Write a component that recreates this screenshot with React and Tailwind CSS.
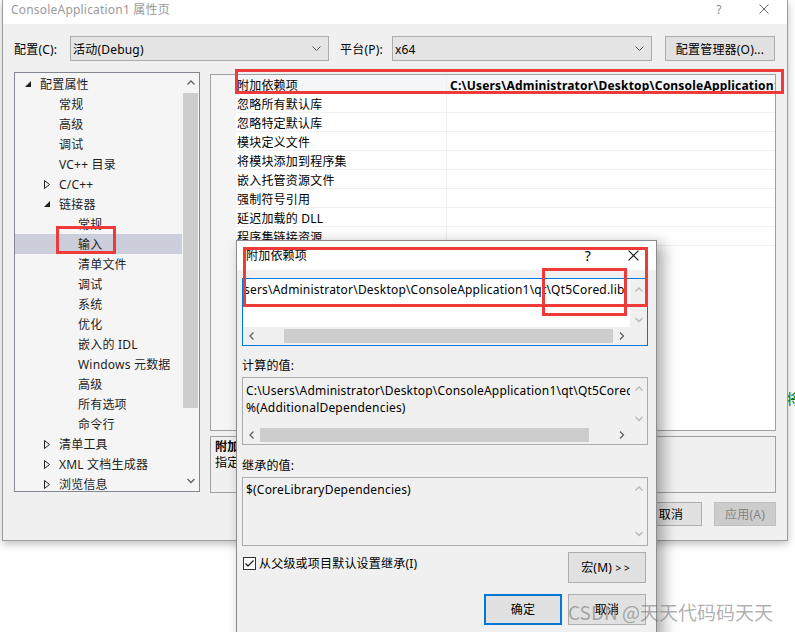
import React from "react";

const TREE = [
  { label: "配置属性", level: 0, exp: "open" },
  { label: "常规", level: 1 },
  { label: "高级", level: 1 },
  { label: "调试", level: 1 },
  { label: "VC++ 目录", level: 1 },
  { label: "C/C++", level: 1, exp: "closed" },
  { label: "链接器", level: 1, exp: "open" },
  { label: "常规", level: 2 },
  { label: "输入", level: 2, selected: true },
  { label: "清单文件", level: 2 },
  { label: "调试", level: 2 },
  { label: "系统", level: 2 },
  { label: "优化", level: 2 },
  { label: "嵌入的 IDL", level: 2 },
  { label: "Windows 元数据", level: 2 },
  { label: "高级", level: 2 },
  { label: "所有选项", level: 2 },
  { label: "命令行", level: 2 },
  { label: "清单工具", level: 1, exp: "closed" },
  { label: "XML 文档生成器", level: 1, exp: "closed" },
  { label: "浏览信息", level: 1, exp: "closed" },
];

const INDENT = ["pl-[10px]", "pl-[29px]", "pl-[48px]"];

const PROPS = [
  "附加依赖项",
  "忽略所有默认库",
  "忽略特定默认库",
  "模块定义文件",
  "将模块添加到程序集",
  "嵌入托管资源文件",
  "强制符号引用",
  "延迟加载的 DLL",
  "程序集链接资源",
];

const PATH = "C:\\Users\\Administrator\\Desktop\\ConsoleApplication1\\qt\\Qt5Cored.lib";

// small scroll arrows
const Chev = ({ dir, color = "#606060" }) => {
  const pts = {
    up: "0.5,4.5 4,1 7.5,4.5",
    down: "0.5,1 4,4.5 7.5,1",
    left: "4.5,0.5 1,4 4.5,7.5",
    right: "1,0.5 4.5,4 1,7.5",
  }[dir];
  const vertical = dir === "up" || dir === "down";
  return (
    <svg width={vertical ? 8 : 6} height={vertical ? 6 : 8} viewBox={vertical ? "0 0 8 6" : "0 0 6 8"}>
      <polyline points={pts} fill="none" stroke={color} strokeWidth="1.3" />
    </svg>
  );
};

const Expander = ({ exp }) => {
  if (exp === "open")
    return (
      <svg width="6" height="6" viewBox="0 0 6 6">
        <polygon points="6,0 6,6 0,6" fill="#1e1e1e" />
      </svg>
    );
  if (exp === "closed")
    return (
      <svg width="6" height="9" viewBox="0 0 6 9">
        <polygon points="0.5,0.5 5.5,4.5 0.5,8.5" fill="none" stroke="#1e1e1e" strokeWidth="1" />
      </svg>
    );
  return null;
};

const CloseX = ({ color, size = 10 }) => (
  <svg width={size} height={size} viewBox="0 0 10 10">
    <path d="M0.5 0.5 L9.5 9.5 M9.5 0.5 L0.5 9.5" stroke={color} strokeWidth="1" />
  </svg>
);

const Combo = ({ text, w }) => (
  <div className={`${w} h-[25px] flex items-center bg-[#e5e5e5] border border-[#acacac] pl-[2px] pr-[7px]`}>
    <span className="flex-1 pt-[3px]">{text}</span>
    <svg width="9" height="5" viewBox="0 0 9 5">
      <polyline points="0.5,0.5 4.5,4.5 8.5,0.5" fill="none" stroke="#555" strokeWidth="1" />
    </svg>
  </div>
);

const HScroll = ({ thumb }) => (
  <div className="h-[18px] flex items-center bg-[#f0f0f0]">
    <div className="w-[17px] flex justify-center">
      <Chev dir="left" />
    </div>
    <div className="flex-1 h-full flex items-center">
      <div className={`h-[14px] bg-[#cdcdcd] ${thumb}`} />
    </div>
    <div className="w-[17px] flex justify-center">
      <Chev dir="right" />
    </div>
    <div className="w-[17px]" />
  </div>
);

export default function App() {
  return (
    <div className="relative w-[795px] h-[632px] overflow-hidden bg-white text-[12px] leading-none tracking-[0.2px] text-black font-['Noto_Sans','Noto_Sans_CJK_SC',sans-serif]">
      <span className="absolute left-[786px] top-[392px] text-[14px] text-[#008000]">将</span>

      {/* main property page window */}
      <div className="relative ml-[2px] w-[786px] h-[541px] flex flex-col bg-[#f0f0f0] border-x border-b border-[#9c9c9c] shadow-[0_3px_8px_rgba(0,0,0,0.25)]">
        <div className="h-[24px] bg-white flex items-start pt-[4px] pl-[8px]">
          <span className="flex-1 text-[#9a9a9a]">ConsoleApplication1 属性页</span>
          <span className="w-[10px] text-center text-[#8a8a8a]">?</span>
          <span className="ml-[35px] mr-[18px] flex">
            <CloseX color="#6a6a6a" />
          </span>
        </div>

        <div className="mt-[12px] h-[25px] flex items-center pl-[11px]">
          <span className="w-[56px] pt-[3px]">配置(C):</span>
          <Combo text="活动(Debug)" w="w-[259px]" />
          <span className="ml-[11px] w-[52px] pt-[3px]">平台(P):</span>
          <Combo text="x64" w="w-[260px]" />
          <button className="ml-[13px] w-[110px] h-[25px] pt-[2px] bg-[#e1e1e1] border border-[#adadad]">配置管理器(O)...</button>
        </div>

        <div className="mt-[11px] h-[421px] flex pl-[11px] gap-[10px]">
          {/* tree */}
          <div className="w-[186px] h-[420px] border border-[#828790] bg-[#f5f5f5] flex overflow-hidden">
            <div className="flex-1 pt-[1px] text-[#1e1e1e]">
              {TREE.map((t, i) => (
                <div
                  key={i}
                  className={`h-[20px] flex items-center ${INDENT[t.level]} ${t.selected ? "bg-[#cccedb]" : ""}`}
                >
                  <span className="w-[15px] flex items-center">
                    <Expander exp={t.exp} />
                  </span>
                  <span className="pt-[2px] whitespace-nowrap">{t.label}</span>
                </div>
              ))}
            </div>
            <div className="w-[17px] flex flex-col">
              <div className="h-[20px] flex items-center justify-center">
                <Chev dir="up" />
              </div>
              <div className="mx-[1px] h-[315px] bg-[#cdcdcd]" />
              <div className="flex-1" />
              <div className="h-[20px] flex items-center justify-center">
                <Chev dir="down" />
              </div>
            </div>
          </div>

          {/* property grid + description */}
          <div className="w-[566px] pt-[2px] flex flex-col gap-[5px]">
            <div className="h-[357px] border border-[#a0a0a0] bg-white flex overflow-hidden">
              <div className="w-[25px] shrink-0 bg-[#f5f5f5]" />
              <div className="flex-1 min-w-0">
                {PROPS.map((p, i) => (
                  <div
                    key={p}
                    className={`h-[19px] flex items-center border-b border-[#f0f0f0] ${i === 0 ? "bg-[#f4f6f9]" : ""}`}
                  >
                    <span className="w-[210px] shrink-0 pl-[1px] pt-[4px] whitespace-nowrap">{p}</span>
                    <span className="flex-1 min-w-0 h-full flex items-center border-l border-[#f0f0f0] pl-[3px] pt-[3px] font-bold whitespace-nowrap overflow-hidden">
                      {i === 0 ? PATH + ";%(AdditionalDependencies)" : ""}
                    </span>
                  </div>
                ))}
              </div>
            </div>
            <div className="h-[57px] border border-[#a0a0a0] pl-[4px] pt-[4px] flex flex-col gap-[4px]">
              <span className="font-bold">附加依赖项</span>
              <span>指定要添加到链接命令行的附加项。</span>
            </div>
          </div>
        </div>

        <div className="mt-[9px] flex justify-end gap-[12px] pr-[11px]">
          <button className="w-[62px] h-[24px] pt-[2px] bg-[#e1e1e1] border border-[#adadad]">确定</button>
          <button className="w-[62px] h-[24px] pt-[2px] bg-[#e1e1e1] border border-[#adadad]">取消</button>
          <button className="w-[62px] h-[24px] pt-[2px] bg-[#cccccc] border border-[#bfbfbf] text-[#838383]">应用(A)</button>
        </div>
      </div>

      {/* modal dialog */}
      <div className="absolute left-[236px] top-[240px] w-[421px] h-[400px] flex flex-col bg-[#f0f0f0] border border-[#8c8c8c] shadow-[6px_4px_14px_rgba(0,0,0,0.35)]">
        <div className="h-[29px] bg-white flex items-center pl-[9px]">
          <span className="flex-1">附加依赖项</span>
          <span className="w-[12px] text-center text-[14px]">?</span>
          <span className="ml-[34px] mr-[17px] flex">
            <CloseX color="#111" size={11} />
          </span>
        </div>

        <div className="pl-[5px] pr-[8px] flex flex-col">
          {/* editable list */}
          <div className="mt-[8px] h-[68px] border border-[#0078d7] flex flex-col">
            <div className="h-[48px] flex">
              <div className="flex-1 min-w-0 bg-white pt-[3px] pl-[1px] overflow-hidden">
                <div className="h-[16px] flex items-center whitespace-nowrap">
                  {"sers\\Administrator\\Desktop\\ConsoleApplication1\\qt\\Qt5Cored.lib"}
                </div>
              </div>
              <div className="w-[17px] bg-[#f0f0f0] flex flex-col items-center pt-[8px] gap-[24px]">
                <Chev dir="up" color="#b8b8b8" />
                <Chev dir="down" color="#b8b8b8" />
              </div>
            </div>
            <HScroll thumb="ml-[24px] flex-1" />
          </div>

          <div className="mt-[9px] h-[20px] pt-[2px] flex items-center">计算的值:</div>
          <div className="mt-[2px] h-[68px] border border-[#acacac] flex flex-col">
            <div className="h-[48px] flex">
              <div className="flex-1 min-w-0 pt-[4px] pl-[3px] overflow-hidden">
                <div className="h-[17px] flex items-center whitespace-nowrap">{PATH}</div>
                <div className="h-[17px] flex items-center whitespace-nowrap">%(AdditionalDependencies)</div>
              </div>
              <div className="w-[17px] flex flex-col items-center pt-[8px] gap-[24px]">
                <Chev dir="up" color="#b8b8b8" />
                <Chev dir="down" color="#b8b8b8" />
              </div>
            </div>
            <HScroll thumb="w-[329px]" />
          </div>

          <div className="mt-[10px] h-[20px] pt-[2px] flex items-center">继承的值:</div>
          <div className="mt-[2px] h-[69px] border border-[#acacac] flex">
            <div className="flex-1 pt-[3px] pl-[3px]">
              <div className="h-[17px] flex items-center">$(CoreLibraryDependencies)</div>
            </div>
            <div className="w-[17px] flex flex-col items-center pt-[8px] pb-[8px] justify-between">
              <Chev dir="up" color="#b8b8b8" />
              <Chev dir="down" color="#b8b8b8" />
            </div>
          </div>

          <div className="mt-[6px] flex justify-between items-start">
            <div className="mt-[5px] ml-[1px] flex items-center gap-[3px]">
              <svg width="13" height="13" viewBox="0 0 13 13">
                <rect x="0.5" y="0.5" width="12" height="12" fill="#fff" stroke="#333" />
                <polyline points="2.5,6.5 5,9 10.5,3.5" fill="none" stroke="#222" strokeWidth="1.3" />
              </svg>
              <span>从父级或项目默认设置继承(I)</span>
            </div>
            <button className="mr-[2px] w-[78px] h-[31px] bg-[#e1e1e1] border border-[#adadad]">
              宏(M) <span className="tracking-[3px] text-[10px]">&gt;&gt;</span>
            </button>
          </div>

          <div className="mt-[11px] mr-[2px] flex justify-end gap-[6px]">
            <button className="w-[78px] h-[31px] bg-[#e1e1e1] border-2 border-[#0078d7]">确定</button>
            <button className="w-[78px] h-[31px] bg-[#e1e1e1] border border-[#adadad]">取消</button>
          </div>
        </div>
      </div>

      {/* red annotation boxes */}
      <div className="absolute left-[56px] top-[226px] w-[60px] h-[28px] border-[3px] border-[#ef3a3a]" />
      <div className="absolute left-[235px] top-[69px] w-[549px] h-[25px] border-[3px] border-[#ef3a3a]" />
      <div className="absolute left-[243px] top-[247px] w-[405px] h-[60px] border-[3px] border-[#ef3a3a]" />
      <div className="absolute left-[542px] top-[268px] w-[85px] h-[48px] border-[3px] border-[#ef3a3a]" />

      <span className="absolute left-[568px] top-[602px] text-[19px] leading-none tracking-normal text-[rgba(110,110,110,0.55)] font-['Noto_Sans_CJK_SC',sans-serif] whitespace-nowrap">
        CSDN @天天代码码天天
      </span>
    </div>
  );
}
